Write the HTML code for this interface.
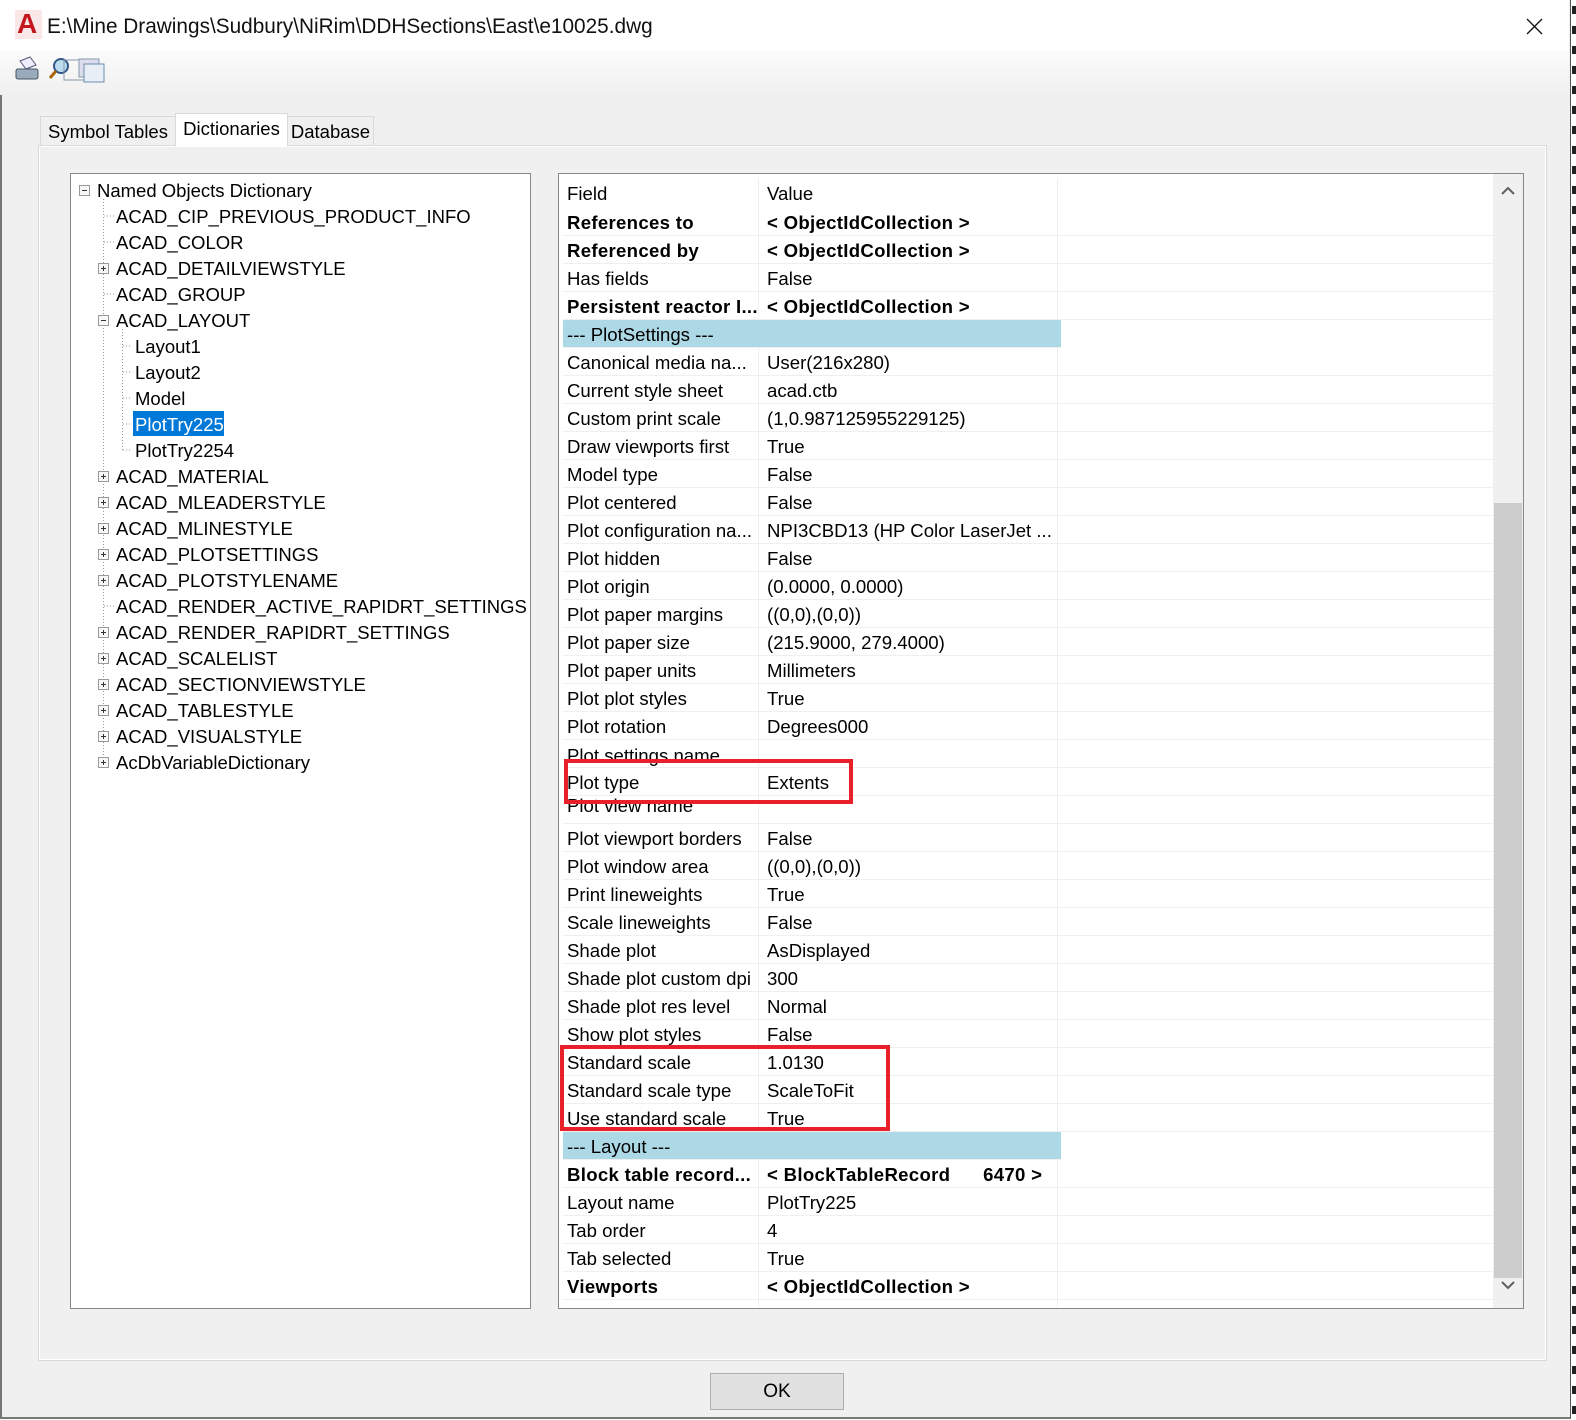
<!DOCTYPE html>
<html><head><meta charset="utf-8"><style>
*{margin:0;padding:0;box-sizing:border-box}
body{width:1576px;height:1420px;position:relative;background:#fff;font-family:"Liberation Sans",sans-serif;color:#000;overflow:hidden}
.abs{position:absolute}
#win{left:0;top:0;width:1571px;height:1419px;background:#f0f0f0;border-left:2px solid #777;border-bottom:2px solid #777;border-right:1px solid #555}
#title{left:0;top:0;width:1569px;height:50px;background:#fff}
#tb{left:0;top:50px;width:1569px;height:45px;background:linear-gradient(#fbfbfb,#f0f0f0)}
.t{position:absolute;white-space:nowrap;font-size:18.5px}
.tab{position:absolute;font-size:18.5px;border:1px solid #d9d9d9;border-bottom:none;background:#f0f0f0;text-align:center}
#panel{left:38px;top:145px;width:1509px;height:1216px;border:1px solid #d9d9d9;box-shadow:inset 1px 1px 0 #fff,inset -1px -1px 0 #fff}
#tree{left:70px;top:173px;width:461px;height:1136px;background:#fff;border:1px solid #828790}
#tbl{left:558px;top:173px;width:966px;height:1136px;background:#fff;border:1px solid #828790;overflow:hidden}
.row{position:absolute;left:4px;width:930px;height:28px;border-bottom:1px solid #efefef}
.row .f{position:absolute;left:4px;top:1px;line-height:28px;font-size:18.6px;white-space:nowrap}
.row .v{position:absolute;left:204px;top:1px;line-height:28px;font-size:18.6px;white-space:nowrap}
.b{font-weight:bold;letter-spacing:0.3px}
.sec{background:#add8e6;width:498px}
.box{position:absolute;width:11px;height:11px;border:1px solid #999;background:#f8f8f8}
.box:before{content:"";position:absolute;left:2px;top:4px;width:5px;height:1px;background:#333}
.plus:after{content:"";position:absolute;left:4px;top:2px;width:1px;height:5px;background:#333}
.red{position:absolute;border:4px solid #e8202a}
</style></head><body>
<div id="win" class="abs"></div>
<div id="title" class="abs"></div>
<div class="abs" style="left:15px;top:10px;width:27px;height:29px;background:#fae8e8"></div>
<div class="abs" style="left:17px;top:8px;font-size:28px;font-weight:bold;color:#c4161c">A</div>
<div class="t" style="left:47px;top:15px;font-size:20.8px;color:#111">E:\Mine Drawings\Sudbury\NiRim\DDHSections\East\e10025.dwg</div>
<svg class="abs" style="left:1525px;top:17px" width="20" height="20"><path d="M2 2L17 17M17 2L2 17" stroke="#111" stroke-width="1.3"/></svg>
<div id="tb" class="abs"></div>
<svg class="abs" style="left:14px;top:55px" width="95" height="28">
<path d="M6 6l10-4 6 8-10 4z" fill="#eef" stroke="#557"/><rect x="2" y="14" width="22" height="10" rx="2" fill="#9ab" stroke="#456"/>
<circle cx="47" cy="11" r="7" fill="#bde" stroke="#358" stroke-width="2"/><path d="M42 16l-6 7" stroke="#a60" stroke-width="3"/><rect x="50" y="5" width="22" height="20" fill="none" stroke="#89a"/>
<rect x="65" y="4" width="20" height="18" fill="#dde" stroke="#89a"/><rect x="70" y="9" width="20" height="18" fill="#e8eef6" stroke="#6a8cb0"/>
</svg>
<div class="tab" style="left:40px;top:116px;width:136px;height:30px;line-height:30px">Symbol Tables</div>
<div class="tab" style="left:287px;top:116px;width:87px;height:30px;line-height:30px">Database</div>
<div id="panel" class="abs"></div>
<div class="tab" style="left:175px;top:113px;width:113px;height:33px;line-height:30px;background:#fff;z-index:2">Dictionaries</div>

<div id="tree" class="abs"></div>
<svg class="abs" style="left:70px;top:175px" width="460" height="1136">
<g stroke="#999" stroke-dasharray="1,2" fill="none">
<path d="M33.5 24V588"/>
<path d="M34 41H44M34 67H44M34 119H44M52.5 154V275M53 171H62M53 197H62M53 223H62M53 249H62M53 275H62M34 431H44"/>
</g></svg>
<div class="box" style="left:79px;top:185px"></div>
<div class="box plus" style="left:98px;top:263px"></div>
<div class="box" style="left:98px;top:315px"></div>
<div class="box plus" style="left:98px;top:471px"></div>
<div class="box plus" style="left:98px;top:497px"></div>
<div class="box plus" style="left:98px;top:523px"></div>
<div class="box plus" style="left:98px;top:549px"></div>
<div class="box plus" style="left:98px;top:575px"></div>
<div class="box plus" style="left:98px;top:627px"></div>
<div class="box plus" style="left:98px;top:653px"></div>
<div class="box plus" style="left:98px;top:679px"></div>
<div class="box plus" style="left:98px;top:705px"></div>
<div class="box plus" style="left:98px;top:731px"></div>
<div class="box plus" style="left:98px;top:757px"></div>
<div class="abs" style="left:133px;top:411px;width:91px;height:25px;background:#0078d7"></div>
<div class="t" style="left:97px;top:180px">Named Objects Dictionary</div>
<div class="t" style="left:116px;top:206px">ACAD_CIP_PREVIOUS_PRODUCT_INFO</div>
<div class="t" style="left:116px;top:232px">ACAD_COLOR</div>
<div class="t" style="left:116px;top:258px">ACAD_DETAILVIEWSTYLE</div>
<div class="t" style="left:116px;top:284px">ACAD_GROUP</div>
<div class="t" style="left:116px;top:310px">ACAD_LAYOUT</div>
<div class="t" style="left:135px;top:336px">Layout1</div>
<div class="t" style="left:135px;top:362px">Layout2</div>
<div class="t" style="left:135px;top:388px">Model</div>
<div class="t" style="left:135px;top:414px;color:#fff">PlotTry225</div>
<div class="t" style="left:135px;top:440px">PlotTry2254</div>
<div class="t" style="left:116px;top:466px">ACAD_MATERIAL</div>
<div class="t" style="left:116px;top:492px">ACAD_MLEADERSTYLE</div>
<div class="t" style="left:116px;top:518px">ACAD_MLINESTYLE</div>
<div class="t" style="left:116px;top:544px">ACAD_PLOTSETTINGS</div>
<div class="t" style="left:116px;top:570px">ACAD_PLOTSTYLENAME</div>
<div class="t" style="left:116px;top:596px">ACAD_RENDER_ACTIVE_RAPIDRT_SETTINGS</div>
<div class="t" style="left:116px;top:622px">ACAD_RENDER_RAPIDRT_SETTINGS</div>
<div class="t" style="left:116px;top:648px">ACAD_SCALELIST</div>
<div class="t" style="left:116px;top:674px">ACAD_SECTIONVIEWSTYLE</div>
<div class="t" style="left:116px;top:700px">ACAD_TABLESTYLE</div>
<div class="t" style="left:116px;top:726px">ACAD_VISUALSTYLE</div>
<div class="t" style="left:116px;top:752px">AcDbVariableDictionary</div>

<div id="tbl" class="abs">
<div class="abs" style="left:199px;top:4px;width:1px;height:1130px;background:#efefef"></div>
<div class="abs" style="left:498px;top:4px;width:1px;height:1130px;background:#efefef"></div>
<div class="row" style="top:5px;border:none"><span class="f">Field</span><span class="v">Value</span></div>
<div class="row" style="top:34px"><span class="f b">References to</span><span class="v b">&lt; ObjectIdCollection &gt;</span></div>
<div class="row" style="top:62px"><span class="f b">Referenced by</span><span class="v b">&lt; ObjectIdCollection &gt;</span></div>
<div class="row" style="top:90px"><span class="f">Has fields</span><span class="v">False</span></div>
<div class="row" style="top:118px"><span class="f b">Persistent reactor I...</span><span class="v b">&lt; ObjectIdCollection &gt;</span></div>
<div class="row sec" style="top:146px"><span class="f">--- PlotSettings ---</span></div>
<div class="row" style="top:174px"><span class="f">Canonical media na...</span><span class="v">User(216x280)</span></div>
<div class="row" style="top:202px"><span class="f">Current style sheet</span><span class="v">acad.ctb</span></div>
<div class="row" style="top:230px"><span class="f">Custom print scale</span><span class="v">(1,0.987125955229125)</span></div>
<div class="row" style="top:258px"><span class="f">Draw viewports first</span><span class="v">True</span></div>
<div class="row" style="top:286px"><span class="f">Model type</span><span class="v">False</span></div>
<div class="row" style="top:314px"><span class="f">Plot centered</span><span class="v">False</span></div>
<div class="row" style="top:342px"><span class="f">Plot configuration na...</span><span class="v">NPI3CBD13 (HP Color LaserJet ...</span></div>
<div class="row" style="top:370px"><span class="f">Plot hidden</span><span class="v">False</span></div>
<div class="row" style="top:398px"><span class="f">Plot origin</span><span class="v">(0.0000, 0.0000)</span></div>
<div class="row" style="top:426px"><span class="f">Plot paper margins</span><span class="v">((0,0),(0,0))</span></div>
<div class="row" style="top:454px"><span class="f">Plot paper size</span><span class="v">(215.9000, 279.4000)</span></div>
<div class="row" style="top:482px"><span class="f">Plot paper units</span><span class="v">Millimeters</span></div>
<div class="row" style="top:510px"><span class="f">Plot plot styles</span><span class="v">True</span></div>
<div class="row" style="top:538px"><span class="f">Plot rotation</span><span class="v">Degrees000</span></div>
<div class="row" style="top:566px"><span class="f" style="top:2px">Plot settings name</span></div>
<div class="row" style="top:594px"><span class="f">Plot type</span><span class="v">Extents</span></div>
<div class="row" style="top:622px"><span class="f" style="top:-4px">Plot view name</span></div>
<div class="row" style="top:650px"><span class="f">Plot viewport borders</span><span class="v">False</span></div>
<div class="row" style="top:678px"><span class="f">Plot window area</span><span class="v">((0,0),(0,0))</span></div>
<div class="row" style="top:706px"><span class="f">Print lineweights</span><span class="v">True</span></div>
<div class="row" style="top:734px"><span class="f">Scale lineweights</span><span class="v">False</span></div>
<div class="row" style="top:762px"><span class="f">Shade plot</span><span class="v">AsDisplayed</span></div>
<div class="row" style="top:790px"><span class="f">Shade plot custom dpi</span><span class="v">300</span></div>
<div class="row" style="top:818px"><span class="f">Shade plot res level</span><span class="v">Normal</span></div>
<div class="row" style="top:846px"><span class="f">Show plot styles</span><span class="v">False</span></div>
<div class="row" style="top:874px"><span class="f">Standard scale</span><span class="v">1.0130</span></div>
<div class="row" style="top:902px"><span class="f">Standard scale type</span><span class="v">ScaleToFit</span></div>
<div class="row" style="top:930px"><span class="f">Use standard scale</span><span class="v">True</span></div>
<div class="row sec" style="top:958px"><span class="f">--- Layout ---</span></div>
<div class="row" style="top:986px"><span class="f b">Block table record...</span><span class="v b">&lt; BlockTableRecord &nbsp;&nbsp;&nbsp;&nbsp;&nbsp;6470 &gt;</span></div>
<div class="row" style="top:1014px"><span class="f">Layout name</span><span class="v">PlotTry225</span></div>
<div class="row" style="top:1042px"><span class="f">Tab order</span><span class="v">4</span></div>
<div class="row" style="top:1070px"><span class="f">Tab selected</span><span class="v">True</span></div>
<div class="row" style="top:1098px"><span class="f b">Viewports</span><span class="v b">&lt; ObjectIdCollection &gt;</span></div>
<div class="abs" style="left:934px;top:0;width:30px;height:1134px;background:#f0f0f0"></div>
<div class="abs" style="left:935px;top:329px;width:28px;height:775px;background:#cdcdcd"></div>
<svg class="abs" style="left:940px;top:10px" width="18" height="14"><path d="M3 10L9 4L15 10" stroke="#606060" stroke-width="2" fill="none"/></svg>
<svg class="abs" style="left:940px;top:1104px" width="18" height="14"><path d="M3 4L9 10L15 4" stroke="#606060" stroke-width="2" fill="none"/></svg>
</div>
<div class="red" style="left:564px;top:759px;width:289px;height:45px"></div>
<div class="red" style="left:560px;top:1045px;width:330px;height:86px"></div>
<div class="abs" style="left:710px;top:1373px;width:134px;height:37px;background:#e1e1e1;border:1px solid #adadad;font-size:19px;text-align:center;line-height:35px">OK</div>
<div class="abs" style="left:1572px;top:0;width:4px;height:1420px;background:repeating-linear-gradient(#fff 0 6px,#222 6px 14px,#fff 14px 20px)"></div>
</body></html>
